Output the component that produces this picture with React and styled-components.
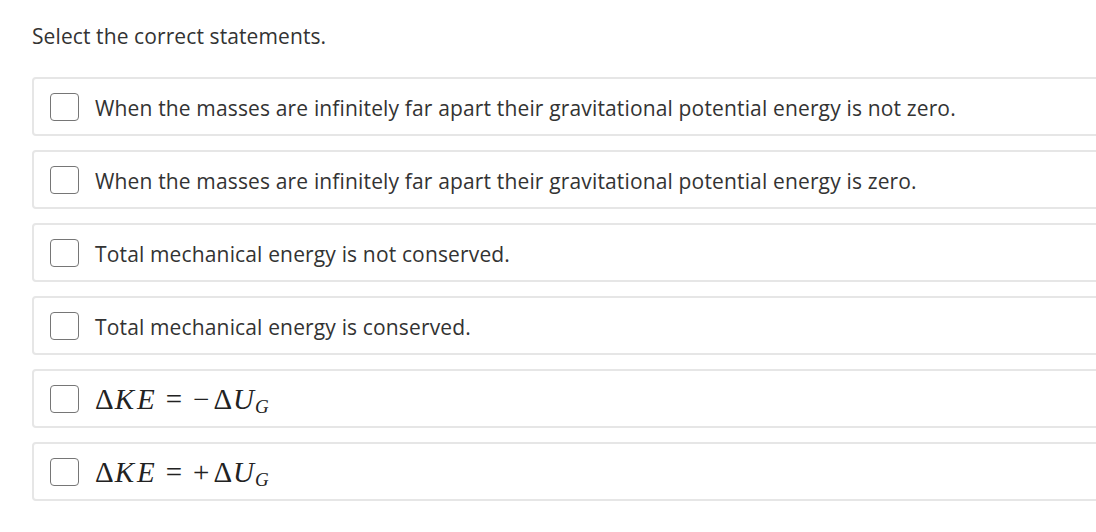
import React from "react";
import styled, { createGlobalStyle } from "styled-components";

const GlobalStyle = createGlobalStyle`
  html, body {
    margin: 0;
    padding: 0;
    background: #fff;
    overflow: hidden;
  }
  body {
    font-family: "Open Sans", "Noto Sans", sans-serif;
    color: #333;
  }
`;

const Page = styled.div`
  padding: 22px 0 0 32px;
`;

const Prompt = styled.p`
  margin: 0 0 27px;
  font-size: 21px;
  line-height: 28px;
  letter-spacing: 0.1px;
  color: #333;
`;

const Options = styled.div`
  display: flex;
  flex-direction: column;
  gap: 14px;
  width: 1100px;
`;

const Option = styled.label`
  display: flex;
  align-items: center;
  gap: 16px;
  height: 59px;
  box-sizing: border-box;
  padding: 0 16px;
  border: 2px solid #e6e6e6;
  border-radius: 4px;
  cursor: pointer;
`;

const Box = styled.span`
  flex: none;
  width: 29px;
  height: 28px;
  box-sizing: border-box;
  border: 1.5px solid #767676;
  border-radius: 4px;
  background: #fff;
`;

const Text = styled.span`
  font-size: 21px;
  letter-spacing: 0.15px;
  color: #333;
  position: relative;
  top: 1px;
`;

const Math = styled.span`
  font-family: "Liberation Serif", "DejaVu Serif", serif;
  font-size: 29px;
  color: #222;
  white-space: nowrap;
  position: relative;
  top: 1px;
`;

const Up = styled.span`
  font-style: normal;
  margin-right: ${(p) => p.$kern || 0}px;
`;

const It = styled.i`
  font-style: italic;
  margin-right: ${(p) => p.$kern || 0}px;
`;

const Rel = styled.span`
  margin: 0 ${(p) => p.$space || 7}px;
`;

const Sub = styled.sub`
  font-size: 19px;
  font-style: italic;
  vertical-align: -4px;
  line-height: 0;
`;

const statements = [
  "When the masses are infinitely far apart their gravitational potential energy is not zero.",
  "When the masses are infinitely far apart their gravitational potential energy is zero.",
  "Total mechanical energy is not conserved.",
  "Total mechanical energy is conserved.",
];

function Formula({ sign }) {
  return (
    <Math>
      <Up $kern={1}>Δ</Up>
      <It $kern={3}>K</It>
      <It>E</It>
      <Rel $space={11}>=</Rel>
      <Up $kern={4}>{sign}</Up>
      <Up $kern={1}>Δ</Up>
      <It $kern={1}>U</It>
      <Sub>G</Sub>
    </Math>
  );
}

export default function App() {
  return (
    <>
      <GlobalStyle />
      <Page>
        <Prompt>Select the correct statements.</Prompt>
        <Options>
          {statements.map((s) => (
            <Option key={s}>
              <Box />
              <Text>{s}</Text>
            </Option>
          ))}
          <Option>
            <Box />
            <Formula sign="−" />
          </Option>
          <Option>
            <Box />
            <Formula sign="+" />
          </Option>
        </Options>
      </Page>
    </>
  );
}
